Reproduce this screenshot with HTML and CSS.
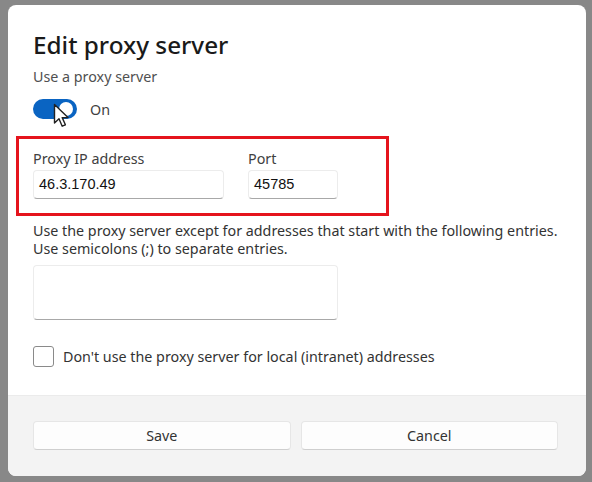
FILE: index.html
```html
<!DOCTYPE html>
<html>
<head>
<meta charset="utf-8">
<link rel="stylesheet" href="styles.css">
</head>
<body>
<div class="dialog">
  <div class="content">
    <h1 class="title">Edit proxy server</h1>
    <div class="label-muted">Use a proxy server</div>
    <div class="toggle-row">
      <div class="toggle"><div class="knob"></div></div>
      <span class="toggle-text">On</span>
      <svg class="cursor" width="18" height="26" viewBox="0 0 18 26">
        <path d="M1.5 1.5 L1.5 20 L6 15.8 L9.2 23.2 L12.4 21.8 L9.2 14.6 L15 14.6 Z" fill="#fff" stroke="#222" stroke-width="1.4" stroke-linejoin="round"/>
      </svg>
    </div>
    <div class="highlight">
      <div class="field">
        <div class="field-label">Proxy IP address</div>
        <div class="input ip">46.3.170.49</div>
      </div>
      <div class="field">
        <div class="field-label">Port</div>
        <div class="input port">45785</div>
      </div>
    </div>
    <p class="desc">Use the proxy server except for addresses that start with the following entries.<br>Use semicolons (;) to separate entries.</p>
    <div class="textarea"></div>
    <div class="check-row">
      <div class="checkbox"></div>
      <span class="check-text">Don't use the proxy server for local (intranet) addresses</span>
    </div>
  </div>
  <div class="footer">
    <div class="btn">Save</div>
    <div class="btn">Cancel</div>
  </div>
</div>
</body>
</html>
```
FILE: styles.css
```css
html, body {
  margin: 0;
  padding: 0;
}
body {
  width: 592px;
  height: 482px;
  background: #888888;
  font-family: "Noto Sans", "Open Sans", sans-serif;
  color: #1b1b1b;
  overflow: hidden;
}
.dialog {
  position: relative;
  margin: 5px 6px 0 8px;
  width: 578px;
  height: 471px;
  background: #fff;
  border-radius: 8px;
  display: flex;
  flex-direction: column;
  overflow: hidden;
}
.content {
  flex: 1;
  padding: 27px 25px 0 25px;
}
.title {
  margin: 0;
  font-size: 24.3px;
  font-weight: 500;
  line-height: 26px;
  color: #1a1a1a;
}
.label-muted {
  margin-top: 9px;
  font-size: 14.3px;
  line-height: 19px;
  color: #505050;
}
.toggle-row {
  position: relative;
  margin-top: 12px;
  display: flex;
  align-items: center;
  height: 22px;
}
.toggle {
  width: 44px;
  height: 20px;
  border-radius: 10px;
  background: #0a64c2;
  position: relative;
}
.knob {
  position: absolute;
  right: 4px;
  top: 3px;
  width: 14px;
  height: 14px;
  border-radius: 50%;
  background: #fff;
}
.toggle-text {
  margin-left: 13px;
  font-size: 14.3px;
  color: #404040;
}
.cursor {
  position: absolute;
  left: 20px;
  top: 5px;
}
.highlight {
  margin: 16px 0 0 -17px;
  width: 373px;
  height: 80px;
  border: 3px solid #e5141d;
  padding: 10px 0 0 14px;
  box-sizing: border-box;
  display: flex;
  gap: 24px;
}
.field-label {
  font-size: 14.3px;
  line-height: 19px;
  color: #404040;
}
.input {
  margin-top: 2px;
  height: 29px;
  box-sizing: border-box;
  border: 1px solid #ececec;
  border-bottom: 1px solid #a8a8a8;
  border-radius: 4px;
  background: #fff;
  font-family: "Liberation Sans", Arial, sans-serif;
  font-size: 14.5px;
  color: #111;
  padding: 5px 0 0 5px;
}
.ip { width: 191px; }
.port { width: 90px; }
.desc {
  margin: 6px 0 0 0;
  font-size: 14.3px;
  line-height: 18px;
  color: #333;
}
.textarea {
  margin-top: 7px;
  width: 305px;
  height: 55px;
  box-sizing: border-box;
  border: 1px solid #ececec;
  border-bottom: 1px solid #a8a8a8;
  border-radius: 4px;
}
.check-row {
  margin-top: 26px;
  display: flex;
  align-items: center;
}
.checkbox {
  width: 21px;
  height: 21px;
  box-sizing: border-box;
  border: 1px solid #8a8a8a;
  border-radius: 3px;
}
.check-text {
  margin-left: 9px;
  font-size: 14.3px;
  color: #333;
}
.footer {
  height: 81px;
  background: #f3f3f3;
  border-top: 1px solid #ebebeb;
  box-sizing: border-box;
  display: flex;
  gap: 10px;
  padding: 25px 28px 0 25px;
}
.btn {
  flex: 1;
  height: 29px;
  box-sizing: border-box;
  background: #fdfdfd;
  border: 1px solid #e6e6e6;
  border-bottom-color: #cfcfcf;
  border-radius: 4px;
  font-size: 14.3px;
  color: #333;
  display: flex;
  align-items: center;
  justify-content: center;
}
```
